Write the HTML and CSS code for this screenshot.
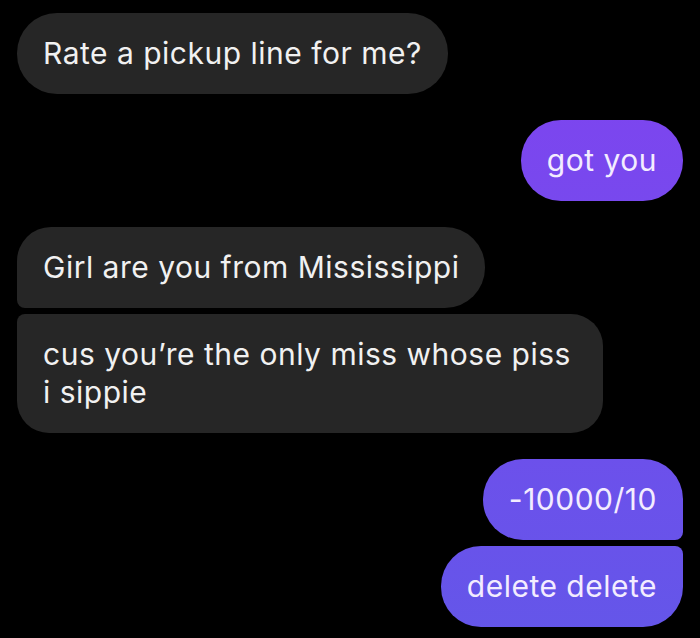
FILE: index.html
```html
<!DOCTYPE html>
<html lang="en">
<head>
<meta charset="utf-8">
<title>Chat</title>
<link rel="stylesheet" href="styles.css">
</head>
<body>
<main class="thread">
  <div class="group group-in">
    <div class="bubble in solo">Rate a pickup line for me?</div>
  </div>
  <div class="group group-out">
    <div class="bubble out solo">got you</div>
  </div>
  <div class="group group-in">
    <div class="bubble in first">Girl are you from Mississippi</div>
    <div class="bubble in last wide">cus you’re the only miss whose piss i sippie</div>
  </div>
  <div class="group group-out">
    <div class="bubble out first">-10000/10</div>
    <div class="bubble out last">delete delete</div>
  </div>
</main>
</body>
</html>
```

FILE: styles.css
```css
html, body {
  margin: 0;
  padding: 0;
  background: #000;
}

body {
  font-family: "Inter", "Liberation Sans", sans-serif;
  font-size: 30px;
  line-height: 38px;
  letter-spacing: 0.5px;
  -webkit-font-smoothing: antialiased;
}

.thread {
  display: flex;
  flex-direction: column;
  gap: 26px;
  padding: 13px 17px 0;
}

.group {
  display: flex;
  flex-direction: column;
  gap: 6px;
}

.group-in { align-items: flex-start; }
.group-out { align-items: flex-end; }

.bubble {
  box-sizing: border-box;
  padding: 21px 26px 22px 26px;
  border-radius: 40px;
}

.in {
  background: #262626;
  color: #f1f1f1;
}

.out {
  background: linear-gradient(to bottom, #8142f0 0px, #6456e9 638px) fixed;
  color: #f3ecff;
}

.wide { max-width: 586px; }

.in.first { border-radius: 34px 40px 40px 8px; }
.in.last { border-radius: 8px 32px 32px 32px; }
.out.first { border-radius: 40px 40px 8px 40px; }
.out.last { border-radius: 40px 8px 40px 40px; }
```
